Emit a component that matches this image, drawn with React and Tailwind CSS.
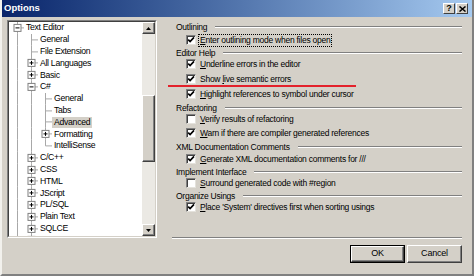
import React from "react";

const UI_FONT = "font-['Liberation_Sans',Arial,sans-serif]";

// tree rows: lv = depth, exp = expander sign, cols = guide line per column
const TREE = [
  { t: "Text Editor", lv: 0, exp: "-", cols: ["full"] },
  { t: "General", lv: 1, cols: ["full", "full"] },
  { t: "File Extension", lv: 1, cols: ["full", "full"] },
  { t: "All Languages", lv: 1, exp: "+", cols: ["full", "full"] },
  { t: "Basic", lv: 1, exp: "+", cols: ["full", "full"] },
  { t: "C#", lv: 1, exp: "-", cols: ["full", "full"] },
  { t: "General", lv: 2, cols: ["full", "full", "full"] },
  { t: "Tabs", lv: 2, cols: ["full", "full", "full"] },
  { t: "Advanced", lv: 2, sel: true, cols: ["full", "full", "full"] },
  { t: "Formatting", lv: 2, exp: "+", cols: ["full", "full", "full"] },
  { t: "IntelliSense", lv: 2, cols: ["full", "full", "half"] },
  { t: "C/C++", lv: 1, exp: "+", cols: ["full", "full"] },
  { t: "CSS", lv: 1, exp: "+", cols: ["full", "full"] },
  { t: "HTML", lv: 1, exp: "+", cols: ["full", "full"] },
  { t: "JScript", lv: 1, exp: "+", cols: ["full", "full"] },
  { t: "PL/SQL", lv: 1, exp: "+", cols: ["full", "full"] },
  { t: "Plain Text", lv: 1, exp: "+", cols: ["full", "full"] },
  { t: "SQLCE", lv: 1, exp: "+", cols: ["full", "full"] },
  { t: "Resource Editor", lv: 1, exp: "+", cols: ["full", "full"] },
];

const OPTS = [
  { h: "Outlining", mt: "mt-[1.5px]" },
  { c: "Enter outlining mode when files open", u: 0, on: true, focus: true, mt: "mt-[2px]" },
  { h: "Editor Help", mt: "mt-[2px]" },
  { c: "Underline errors in the editor", u: 0, on: true, mt: "mt-0" },
  { c: "Show live semantic errors", u: 5, on: true, mt: "mt-[4px]" },
  { red: true, mt: "mt-[0.5px]" },
  { c: "Highlight references to symbol under cursor", u: 0, on: true, mt: "mt-[1.5px]" },
  { h: "Refactoring", mt: "mt-[3px]" },
  { c: "Verify results of refactoring", u: 0, on: false, mt: "mt-0" },
  { c: "Warn if there are compiler generated references", u: 0, on: true, mt: "mt-[3px]" },
  { h: "XML Documentation Comments", mt: "mt-[3px]" },
  { c: "Generate XML documentation comments for ///", u: 0, on: true, mt: "mt-[1px]" },
  { h: "Implement Interface", mt: "mt-[2px]" },
  { c: "Surround generated code with #region", u: 0, on: false, mt: "mt-0" },
  { h: "Organize Usings", mt: "mt-[2px]" },
  { c: "Place 'System' directives first when sorting usings", u: 0, on: true, mt: "mt-0" },
];

function Gutter({ lv, exp, cols }) {
  const h = 11.8;
  const m = 5.9;
  const w = 15 + 14 * lv;
  const cx = 8.5 + 14 * lv;
  return (
    <svg width={w} height={h} className="block shrink-0">
      {cols.map((c, k) => (
        <line key={k} x1={8.5 + 14 * k} x2={8.5 + 14 * k} y1={0} y2={c === "half" ? m : h} stroke="#a8a8a8" />
      ))}
      <line x1={cx} x2={w} y1={m} y2={m} stroke="#a8a8a8" />
      {exp && (
        <g>
          <rect x={cx - 3.5} y={m - 3.5} width="7" height="7" fill="#fff" stroke="#808080" />
          <line x1={cx - 2} x2={cx + 2} y1={m} y2={m} stroke="#000" />
          {exp === "+" && <line x1={cx} x2={cx} y1={m - 2} y2={m + 2} stroke="#000" />}
        </g>
      )}
    </svg>
  );
}

function ScrollBtn({ up }) {
  return (
    <div className="h-[12px] shrink-0 bg-[#d4d0c8] border border-t-white border-l-white border-r-[#404040] border-b-[#404040] shadow-[inset_-1px_-1px_0_#808080] flex items-center justify-center">
      <svg width="5" height="3" viewBox="0 0 5 3">
        <path d={up ? "M2.5 0 L5 3 L0 3 Z" : "M0 0 L5 0 L2.5 3 Z"} fill="#000" />
      </svg>
    </div>
  );
}

function Tree() {
  return (
    <div className="w-[150px] h-[218px] shrink-0 border border-t-[#808080] border-l-[#808080] border-r-white border-b-white">
      <div className="h-full border border-t-[#404040] border-l-[#404040] border-r-[#d4d0c8] border-b-[#d4d0c8] bg-white flex">
        <div className="flex-1 flex flex-col overflow-hidden">
          {TREE.map((r, i) => (
            <div key={i} className="flex items-center h-[11.8px] shrink-0">
              <Gutter lv={r.lv} exp={r.exp} cols={r.cols} />
              <span className={`px-[2px] h-[11px] leading-[11px] whitespace-nowrap text-[8.7px] tracking-[-0.3px] text-black ${r.sel ? "bg-[#d4d0c8]" : ""}`}>
                {r.t}
              </span>
            </div>
          ))}
        </div>
        <div className="w-[13px] shrink-0 flex flex-col">
          <ScrollBtn up />
          <div className="h-[61px] shrink-0 bg-[#ebe9e4]" />
          <div className="h-[67px] shrink-0 bg-[#d4d0c8] border border-t-white border-l-white border-r-[#404040] border-b-[#404040] shadow-[inset_-1px_-1px_0_#808080]" />
          <div className="flex-1 bg-[#ebe9e4]" />
          <ScrollBtn />
        </div>
      </div>
    </div>
  );
}

function Check({ on }) {
  return (
    <span className="w-[10px] h-[10px] shrink-0 bg-white border border-t-[#808080] border-l-[#808080] border-r-[#e4e2dc] border-b-[#e4e2dc] shadow-[inset_1px_1px_0_#404040] flex items-center justify-center">
      {on && (
        <svg width="8" height="8" viewBox="0 0 8 8">
          <path d="M1.2 3.6 L3.1 5.6 L7 1.4" stroke="#000" strokeWidth="1.7" fill="none" />
        </svg>
      )}
    </span>
  );
}

function Label({ text, u }) {
  return (
    <>
      {text.slice(0, u)}
      <span className="underline underline-offset-[1px]">{text[u]}</span>
      {text.slice(u + 1)}
    </>
  );
}

function Options() {
  return (
    <div className="ml-[3px] flex-1 h-[219px] flex flex-col text-[8.5px] tracking-[-0.25px] text-black">
      {OPTS.map((o, i) => {
        if (o.red) return <div key={i} className={`${o.mt} ml-[8px] w-[188px] h-[2px] bg-[#e3212b] shrink-0`} />;
        if (o.h)
          return (
            <div key={i} className={`${o.mt} h-[11px] shrink-0 flex items-center pl-[16px]`}>
              <span className="whitespace-nowrap leading-[11px]">{o.h}</span>
              <div className="flex-1 ml-[8px] h-[2px] border-t border-t-[#808080] border-b border-b-white" />
            </div>
          );
        return (
          <div key={i} className={`${o.mt} h-[11px] shrink-0 flex items-center pl-[26px] gap-[3px]`}>
            <Check on={o.on} />
            <span className={`whitespace-nowrap leading-[11px] px-[1px] ${o.focus ? "outline outline-1 outline-dotted outline-black" : ""}`}>
              <Label text={o.c} u={o.u} />
            </span>
          </div>
        );
      })}
      <div className="mt-auto ml-[12px] h-[2px] shrink-0 border-t border-t-[#808080] border-b border-b-white" />
    </div>
  );
}

function Btn({ children, def }) {
  const face = (
    <div className="h-full bg-[#d4d0c8] border border-t-white border-l-white border-r-[#404040] border-b-[#404040] shadow-[inset_-1px_-1px_0_#808080] flex items-center justify-center text-[9px] tracking-[-0.2px] text-black">
      {children}
    </div>
  );
  return def ? (
    <div className="w-[55px] h-[18px] border border-black">{face}</div>
  ) : (
    <div className="w-[55px] h-[18px]">{face}</div>
  );
}

export default function App() {
  return (
    <div className={`w-[474px] h-[276px] bg-[#d4d0c8] border-l-2 border-l-[#f2f1ed] border-r-2 border-r-[#808080] border-b-2 border-b-[#808080] flex flex-col overflow-hidden ${UI_FONT}`}>
      <div className="h-[17px] shrink-0 bg-linear-to-r from-[#0a246a] to-[#a6caf0] flex items-center pl-[2px] pr-[4px]">
        <span className="flex-1 text-white font-bold text-[9.5px]">Options</span>
        <div className="flex gap-[1px]">
          <div className="w-[12px] h-[11px] bg-[#d4d0c8] border border-t-white border-l-white border-r-[#404040] border-b-[#404040] flex items-center justify-center text-[9px] font-bold leading-none">?</div>
          <div className="w-[12px] h-[11px] bg-[#d4d0c8] border border-t-white border-l-white border-r-[#404040] border-b-[#404040] flex items-center justify-center">
            <svg width="7" height="6" viewBox="0 0 7 6">
              <path d="M0.5 0.5 L6.5 5.5 M6.5 0.5 L0.5 5.5" stroke="#000" strokeWidth="1.5" />
            </svg>
          </div>
        </div>
      </div>
      <div className="flex items-start pl-[5px] pr-[10px] pt-[3px]">
        <Tree />
        <Options />
      </div>
      <div className="flex justify-end gap-[2px] mt-[6px] pr-[10px]">
        <Btn def>OK</Btn>
        <Btn>Cancel</Btn>
      </div>
    </div>
  );
}
